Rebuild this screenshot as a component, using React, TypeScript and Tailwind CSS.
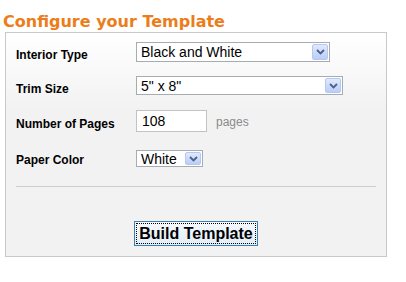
import React from 'react';

const Arrow: React.FC = () => (
  <div className="flex h-full w-[16px] items-center justify-center rounded-[2px] border border-[#b5c8f2] bg-gradient-to-b from-[#e0e9fe] to-[#b9cdf8]">
    <svg width="9" height="6" viewBox="0 0 9 6">
      <path d="M1 1 L4.5 4.5 L8 1" fill="none" stroke="#4d6185" strokeWidth="1.8" />
    </svg>
  </div>
);

interface FakeSelectProps {
  value: string;
  width: string;
  height: string;
}

const FakeSelect: React.FC<FakeSelectProps> = ({ value, width, height }) => (
  <div className={`flex items-stretch border border-[#a5acb2] bg-white p-[1px] ${width} ${height}`}>
    <span className="flex-1 pl-[3px] text-[14px] leading-none self-center text-black">{value}</span>
    <Arrow />
  </div>
);

export default function App() {
  return (
    <div className="h-[282px] w-[406px] bg-white font-['Liberation_Sans',Arial,sans-serif]">
      <h1 className="pl-[3px] pt-[12px] h-[31px] text-[16px] leading-[20px] font-bold text-[#ec7d1a] font-['DejaVu_Sans',Verdana,sans-serif]">
        Configure your Template
      </h1>

      <div className="ml-[5px] mt-[1px] h-[225px] w-[382px] border border-[#c9c9c9] bg-[linear-gradient(to_bottom,#ffffff_0%,#f2f2f2_35%,#f2f2f2_100%)] pt-[9px]">
        <div className="flex h-[20px] pl-[10px]">
          <div className="w-[120px] pt-[6px] text-[12px] leading-[14px] font-bold text-black">Interior Type</div>
          <FakeSelect value="Black and White" width="w-[194px]" height="h-[20px]" />
        </div>

        <div className="mt-[14px] flex h-[19px] pl-[10px]">
          <div className="w-[120px] pt-[6px] text-[12px] leading-[14px] font-bold text-black">Trim Size</div>
          <FakeSelect value={'5" x 8"'} width="w-[207px]" height="h-[19px]" />
        </div>

        <div className="mt-[15px] flex h-[22px] pl-[10px]">
          <div className="w-[120px] pt-[7px] text-[12px] leading-[14px] font-bold text-black">Number of Pages</div>
          <div className="flex h-[22px] w-[71px] items-center border border-[#c3c3c3] bg-white pl-[5px] text-[14px] leading-none text-black">
            108
          </div>
          <span className="ml-[9px] self-center pt-[2px] text-[12px] text-[#8a8a8a]">pages</span>
        </div>

        <div className="mt-[18px] flex h-[17px] pl-[10px]">
          <div className="w-[120px] pt-[3px] text-[12px] leading-[14px] font-bold text-black">Paper Color</div>
          <FakeSelect value="White" width="w-[67px]" height="h-[17px]" />
        </div>

        <div className="mx-[10px] mt-[19px] h-px bg-[#cccccc]" />

        <div className="mt-[34px] flex justify-center">
          <button className="h-[25px] w-[124px] border border-[#3c7fb1] bg-gradient-to-b from-[#f6f9fd] to-[#e2edf8] p-[1px]">
            <span className="flex h-full w-full items-center justify-center border border-dotted border-black text-[16px] font-bold leading-none text-black">
              Build Template
            </span>
          </button>
        </div>
      </div>
    </div>
  );
}
